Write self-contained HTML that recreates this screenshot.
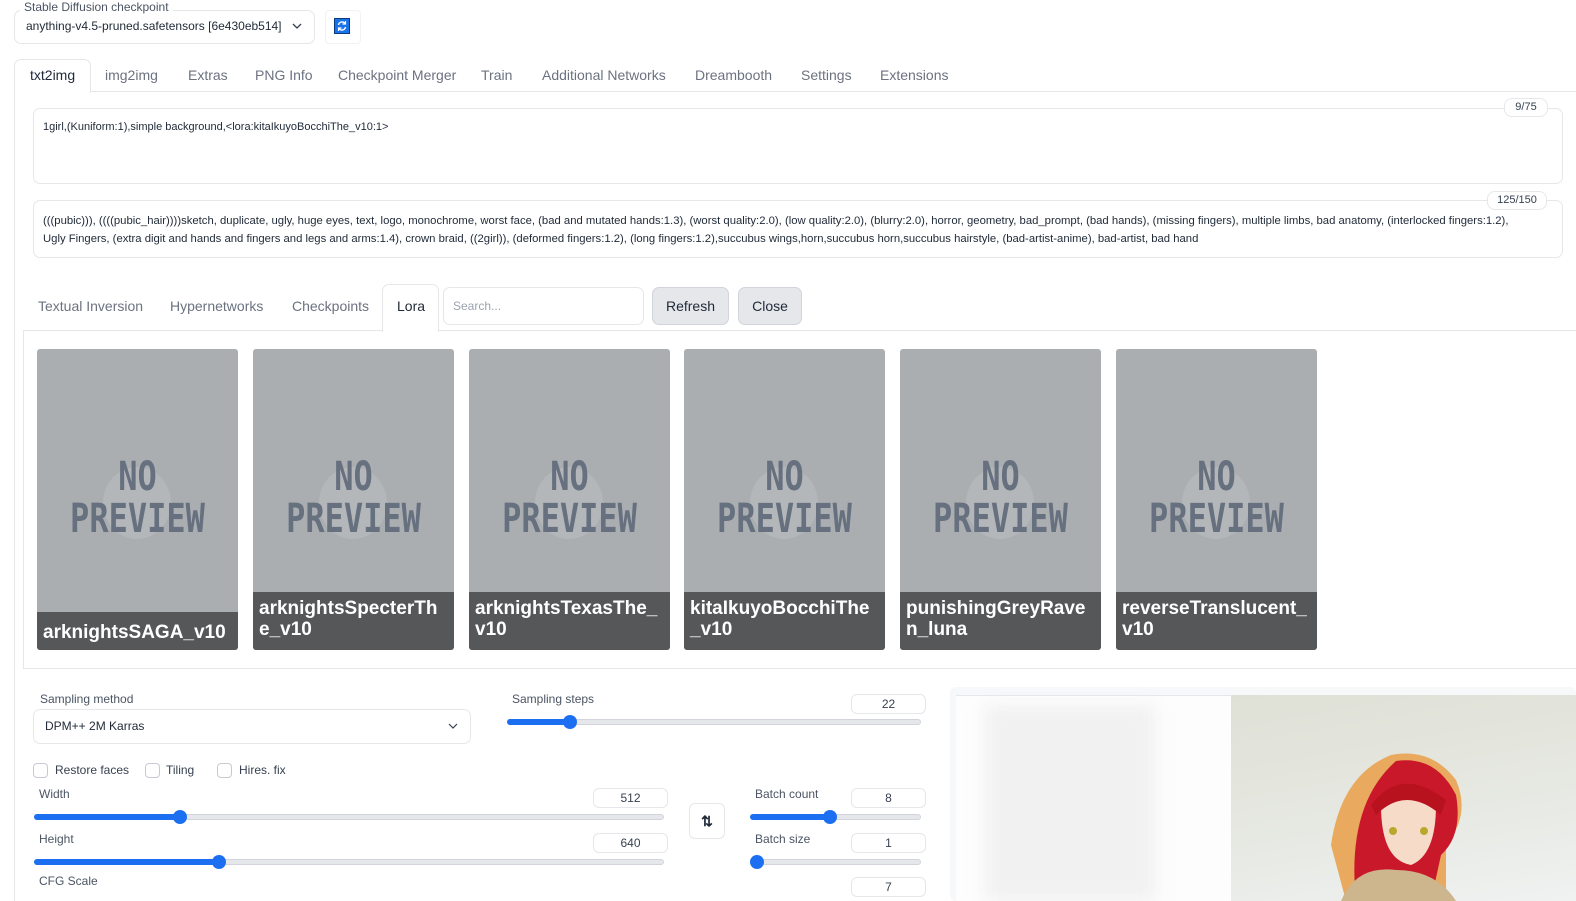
<!DOCTYPE html>
<html><head><meta charset="utf-8"><style>
*{box-sizing:border-box;margin:0;padding:0}
body{width:1576px;height:901px;overflow:hidden;background:#fff;font-family:"Liberation Sans",sans-serif;color:#374151;position:relative;font-size:13px}
.a{position:absolute}
.lbl{font-size:12px;color:#4b5563}
.box{border:1px solid #e5e7eb;border-radius:7px;background:#fff}
.tab{position:absolute;top:67px;font-size:14px;color:#6b7280}
.num{position:absolute;border:1px solid #e5e7eb;border-radius:6px;height:20px;width:75px;font-size:12px;text-align:center;line-height:18px;color:#374151}
.track{position:absolute;height:6px;border-radius:3px;background:#e5e7eb;border:1px solid #d1d5db}
.fill{position:absolute;height:6px;border-radius:3px;background:#1d6ff2}
.thumb{position:absolute;width:14px;height:14px;border-radius:50%;background:#1d6ff2}
.cb{position:absolute;width:15px;height:15px;border:1px solid #c7cbd1;border-radius:4px;top:763px}
.card{position:absolute;top:349px;width:201px;height:301px;background:#abaeb1;border-radius:3px;overflow:hidden}
.card .c{position:absolute;left:66px;top:118px;width:68px;height:72px;border-radius:50%;background:#b4b7ba}
.card .np{position:absolute;left:0;right:0;top:107px;text-align:center;color:#66707f;font-weight:bold;font-family:"DejaVu Sans Mono",monospace;line-height:42px;transform:scaleX(0.8)}
.card .bar{position:absolute;left:0;right:0;bottom:0;background:#555759;color:#fff;font-weight:bold;font-size:19px;line-height:21px;padding:6px 6px 7px 6px}
.card .bar.one{height:38px;padding-top:10px}
.card .bar.two{height:58px}
.et{position:absolute;top:298px;font-size:14px;color:#6b7280}
.btn{position:absolute;top:287px;height:38px;background:#e5e7eb;border:1px solid #d1d5db;border-radius:7px;font-size:14px;color:#1f2937;text-align:center;line-height:36px}
</style></head><body>
<div class="a lbl" style="left:20px;top:0px;background:#fff;padding:0 4px;z-index:2">Stable Diffusion checkpoint</div>
<div class="a box" style="left:14px;top:10px;width:301px;height:34px"></div>
<div class="a" style="left:26px;top:19px;font-size:12px;color:#1f2937">anything-v4.5-pruned.safetensors [6e430eb514]</div>
<svg class="a" style="left:291px;top:21px" width="12" height="10"><path d="M2 3l4 4 4-4" stroke="#374151" fill="none" stroke-width="1.3"/></svg>
<div class="a" style="left:325px;top:10px;width:36px;height:34px;border:1px solid #f1f2f4;border-radius:4px"></div>
<div class="a" style="left:334px;top:18px;width:16px;height:16px;background:#1a73e8;border:1px solid #0b3a80"></div>
<svg class="a" style="left:336px;top:20px" width="12" height="12"><path d="M2.5 5A3.6 3.6 0 0 1 9 3.5M9.5 7A3.6 3.6 0 0 1 3 8.5" stroke="#fff" fill="none" stroke-width="1.4"/><path d="M9.5 1v3h-3M2.5 11V8h3" stroke="#fff" fill="none" stroke-width="1.2"/></svg>
<div class="a" style="left:14px;top:91px;width:1562px;height:1px;background:#e5e7eb"></div>
<div class="a" style="left:14px;top:59px;width:77px;height:34px;border:1px solid #e5e7eb;border-bottom:none;border-radius:7px 7px 0 0;background:#fff"></div>
<div class="a" style="left:14px;top:91px;width:1px;height:810px;background:#e5e7eb"></div>
<div class="tab" style="left:30px;color:#1f2937">txt2img</div>
<div class="tab" style="left:105px">img2img</div>
<div class="tab" style="left:188px">Extras</div>
<div class="tab" style="left:255px">PNG Info</div>
<div class="tab" style="left:338px">Checkpoint Merger</div>
<div class="tab" style="left:481px">Train</div>
<div class="tab" style="left:542px">Additional Networks</div>
<div class="tab" style="left:695px">Dreambooth</div>
<div class="tab" style="left:801px">Settings</div>
<div class="tab" style="left:880px">Extensions</div>
<div class="a box" style="left:33px;top:108px;width:1530px;height:76px"></div>
<div class="a" style="left:43px;top:121px;font-size:11px;color:#1f2937">1girl,(Kuniform:1),simple background,&lt;lora:kitaIkuyoBocchiThe_v10:1&gt;</div>
<div class="a" style="left:1504px;top:98px;width:44px;height:19px;border:1px solid #e5e7eb;border-radius:8px;background:#fff;font-size:11px;text-align:center;line-height:17px">9/75</div>
<div class="a box" style="left:33px;top:200px;width:1530px;height:58px"></div>
<div class="a" style="left:43px;top:212px;width:1480px;font-size:11.3px;line-height:18px;color:#1f2937">(((pubic))), ((((pubic_hair))))sketch, duplicate, ugly, huge eyes, text, logo, monochrome, worst face, (bad and mutated hands:1.3), (worst quality:2.0), (low quality:2.0), (blurry:2.0), horror, geometry, bad_prompt, (bad hands), (missing fingers), multiple limbs, bad anatomy, (interlocked fingers:1.2), Ugly Fingers, (extra digit and hands and fingers and legs and arms:1.4), crown braid, ((2girl)), (deformed fingers:1.2), (long fingers:1.2),succubus wings,horn,succubus horn,succubus hairstyle, (bad-artist-anime), bad-artist, bad hand</div>
<div class="a" style="left:1487px;top:191px;width:60px;height:19px;border:1px solid #e5e7eb;border-radius:8px;background:#fff;font-size:11px;text-align:center;line-height:17px">125/150</div>
<div class="a" style="left:23px;top:330px;width:1553px;height:1px;background:#e5e7eb"></div>
<div class="a" style="left:23px;top:330px;width:1553px;height:339px;border-left:1px solid #e5e7eb;border-bottom:1px solid #e5e7eb"></div>
<div class="a" style="left:382px;top:284px;width:57px;height:48px;border:1px solid #e5e7eb;border-bottom:none;border-radius:7px 7px 0 0;background:#fff"></div>
<div class="et" style="left:38px">Textual Inversion</div>
<div class="et" style="left:170px">Hypernetworks</div>
<div class="et" style="left:292px">Checkpoints</div>
<div class="et" style="left:397px;color:#1f2937">Lora</div>
<div class="a box" style="left:443px;top:287px;width:201px;height:38px"></div>
<div class="a" style="left:453px;top:299px;font-size:12px;color:#9ca3af">Search...</div>
<div class="btn" style="left:652px;width:77px">Refresh</div>
<div class="btn" style="left:738px;width:64px">Close</div>
<div class="card" style="left:37px"><div class="c"></div><div class="np"><div style="font-size:40px">NO</div><div style="font-size:40px">PREVIEW</div></div><div class="bar one">arknightsSAGA_v10</div></div>
<div class="card" style="left:253px"><div class="c"></div><div class="np"><div style="font-size:40px">NO</div><div style="font-size:40px">PREVIEW</div></div><div class="bar two">arknightsSpecterTh e_v10</div></div>
<div class="card" style="left:469px"><div class="c"></div><div class="np"><div style="font-size:40px">NO</div><div style="font-size:40px">PREVIEW</div></div><div class="bar two">arknightsTexasThe_ v10</div></div>
<div class="card" style="left:684px"><div class="c"></div><div class="np"><div style="font-size:40px">NO</div><div style="font-size:40px">PREVIEW</div></div><div class="bar two">kitaIkuyoBocchiThe _v10</div></div>
<div class="card" style="left:900px"><div class="c"></div><div class="np"><div style="font-size:40px">NO</div><div style="font-size:40px">PREVIEW</div></div><div class="bar two">punishingGreyRave n_luna</div></div>
<div class="card" style="left:1116px"><div class="c"></div><div class="np"><div style="font-size:40px">NO</div><div style="font-size:40px">PREVIEW</div></div><div class="bar two">reverseTranslucent_ v10</div></div>
<div class="a lbl" style="left:40px;top:692px">Sampling method</div>
<div class="a box" style="left:33px;top:709px;width:438px;height:35px"></div>
<div class="a" style="left:45px;top:719px;font-size:12px;color:#1f2937">DPM++ 2M Karras</div>
<svg class="a" style="left:447px;top:721px" width="12" height="10"><path d="M2 3l4 4 4-4" stroke="#374151" fill="none" stroke-width="1.2"/></svg>
<div class="a lbl" style="left:512px;top:692px">Sampling steps</div>
<div class="num" style="left:851px;top:694px">22</div>
<div class="track" style="left:507px;top:719px;width:414px"></div><div class="fill" style="left:507px;top:719px;width:63px"></div><div class="thumb" style="left:563px;top:715px"></div>
<div class="cb" style="left:33px"></div><div class="a" style="left:55px;top:763px;font-size:12px">Restore faces</div>
<div class="cb" style="left:145px"></div><div class="a" style="left:166px;top:763px;font-size:12px">Tiling</div>
<div class="cb" style="left:217px"></div><div class="a" style="left:239px;top:763px;font-size:12px">Hires. fix</div>
<div class="a lbl" style="left:39px;top:787px">Width</div>
<div class="num" style="left:593px;top:788px">512</div>
<div class="track" style="left:34px;top:814px;width:630px"></div><div class="fill" style="left:34px;top:814px;width:146px"></div><div class="thumb" style="left:173px;top:810px"></div>
<div class="a lbl" style="left:39px;top:832px">Height</div>
<div class="num" style="left:593px;top:833px">640</div>
<div class="track" style="left:34px;top:859px;width:630px"></div><div class="fill" style="left:34px;top:859px;width:185px"></div><div class="thumb" style="left:212px;top:855px"></div>
<div class="a lbl" style="left:39px;top:874px">CFG Scale</div>
<div class="a" style="left:689px;top:803px;width:36px;height:36px;border:1px solid #e5e7eb;border-radius:6px;font-size:14px;text-align:center;line-height:34px;color:#1f2937;font-weight:bold">⇅</div>
<div class="a lbl" style="left:755px;top:787px">Batch count</div>
<div class="num" style="left:851px;top:788px">8</div>
<div class="track" style="left:750px;top:814px;width:171px"></div><div class="fill" style="left:750px;top:814px;width:80px"></div><div class="thumb" style="left:823px;top:810px"></div>
<div class="a lbl" style="left:755px;top:832px">Batch size</div>
<div class="num" style="left:851px;top:833px">1</div>
<div class="track" style="left:750px;top:859px;width:171px"></div><div class="thumb" style="left:750px;top:855px"></div>
<div class="num" style="left:851px;top:877px">7</div>
<div class="a" style="left:950px;top:687px;width:626px;height:214px;background:#f7f8fa;border-radius:6px"></div>
<div class="a" style="left:956px;top:695px;width:275px;height:206px;background:#fdfdfd;border-top:1px solid #e5e7eb"></div>
<div class="a" style="left:985px;top:705px;width:170px;height:196px;background:#f1f1f1;filter:blur(8px)"></div>
<div class="a" style="left:1231px;top:695px;width:345px;height:206px;background:linear-gradient(170deg,#dfe1d6,#e6e8e2 55%,#f0f2f2);overflow:hidden">
<svg width="345" height="206"><path d="M115 206 L100 150 Q110 80 160 60 Q200 52 225 85 Q240 120 215 150 L215 206Z" fill="#e9a95e"/><path d="M125 206 Q115 110 165 66 Q205 60 225 100 Q232 140 210 160 L200 206Z" fill="#c9182a"/><path d="M150 110 Q180 95 205 110 Q205 160 180 170 Q150 165 150 110Z" fill="#f6dcc8"/><path d="M140 110 Q170 70 215 105 L210 120 Q175 90 145 120Z" fill="#b8121f"/><path d="M110 206 Q125 170 165 175 Q205 175 225 206Z" fill="#cdb58e"/><circle cx="162" cy="136" r="4" fill="#b9a82c"/><circle cx="193" cy="136" r="4" fill="#b9a82c"/></svg>
</div>
</body></html>
